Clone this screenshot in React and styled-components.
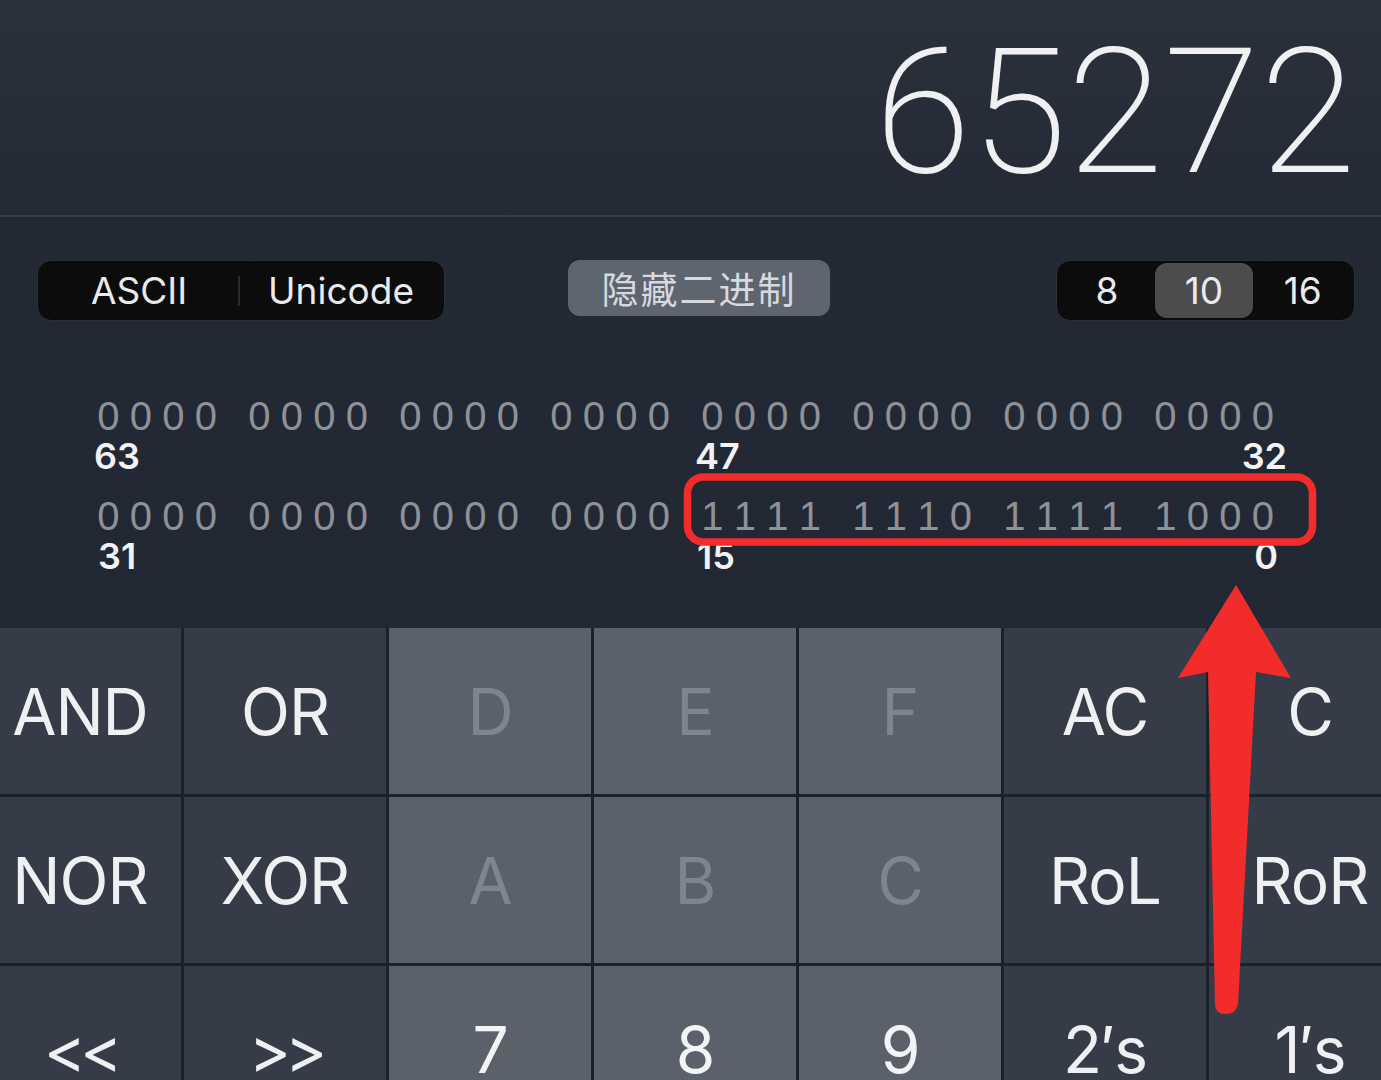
import styled, { createGlobalStyle } from 'styled-components'

const GlobalStyle = createGlobalStyle`
  html, body {
    margin: 0;
    padding: 0;
    background: #222833;
  }

  body {
    width: 1381px;
    height: 1080px;
    overflow: hidden;
    font-family: Inter, "Noto Sans CJK SC", sans-serif;
  }
`

const upperBits = ['0000', '0000', '0000', '0000', '0000', '0000', '0000', '0000']
const lowerBits = ['0000', '0000', '0000', '0000', '1111', '1110', '1111', '1000']

const keys = [
  { label: 'AND', tone: 'dark' },
  { label: 'OR', tone: 'dark' },
  { label: 'D', tone: 'off' },
  { label: 'E', tone: 'off' },
  { label: 'F', tone: 'off' },
  { label: 'AC', tone: 'dark' },
  { label: 'C', tone: 'dark' },
  { label: 'NOR', tone: 'dark' },
  { label: 'XOR', tone: 'dark' },
  { label: 'A', tone: 'off' },
  { label: 'B', tone: 'off' },
  { label: 'C', tone: 'off' },
  { label: 'RoL', tone: 'dark' },
  { label: 'RoR', tone: 'dark' },
  { label: '<<', tone: 'dark', tight: true },
  { label: '>>', tone: 'dark', tight: true },
  { label: '7', tone: 'light' },
  { label: '8', tone: 'light' },
  { label: '9', tone: 'light' },
  { label: '2′s', tone: 'dark' },
  { label: '1′s', tone: 'dark' },
]

const BitRow = ({ groups }) => (
  <DigitRow>
    {groups.map((group, i) => (
      <Group key={i}>
        {group.split('').map((bit, j) => (
          <Bit key={j}>{bit}</Bit>
        ))}
      </Group>
    ))}
  </DigitRow>
)

const App = () => {
  return (
    <Page>
      <GlobalStyle />
      <Display>
        <Value>65272</Value>
      </Display>

      <Controls>
        <Segmented $width={408}>
          <Segment $width={201}>ASCII</Segment>
          <Divider />
          <Segment $width={205}>Unicode</Segment>
        </Segmented>
        <HideButton>隐藏二进制</HideButton>
        <BaseSwitch>
          <Segmented $width={299}>
            <Segment $width={97}>8</Segment>
            <Segment $width={100} $active>10</Segment>
            <Segment $width={100}>16</Segment>
          </Segmented>
        </BaseSwitch>
      </Controls>

      <Bits>
        <BitRow groups={upperBits} />
        <LabelRow>
          <Label $col={1} $shift={2}>63</Label>
          <Label $col={5} $shift={-1}>47</Label>
          <Label $col={8} $end $shift={8}>32</Label>
        </LabelRow>
        <BitRow groups={lowerBits} />
        <LabelRow>
          <Label $col={1} $shift={6}>31</Label>
          <Label $col={5} $shift={1}>15</Label>
          <Label $col={8} $end $shift={-1}>0</Label>
        </LabelRow>
      </Bits>

      <Keypad>
        {keys.map((key, i) => (
          <Key key={i} $tone={key.tone} $tight={key.tight}>
            {key.label}
          </Key>
        ))}
      </Keypad>

      <Annotation viewBox="0 0 1381 1080">
        <rect x="687.5" y="477" width="625" height="65" rx="16" fill="none" stroke="#f22b2b" strokeWidth="7.5" />
        <path
          d="M1236 585 L1291 678 L1256 672 L1238 1004 Q1236 1014 1226 1014 Q1215 1014 1215 1004 L1208 672 L1178 678 Z"
          fill="#f22b2b"
        />
      </Annotation>
    </Page>
  )
}

const Page = styled.div`
  position: relative;
  width: 1381px;
  height: 1080px;
  overflow: hidden;
  background: linear-gradient(180deg, #232a35 0%, #212733 60%, #1f2530 100%);
`

const Display = styled.div`
  height: 217px;
  display: flex;
  justify-content: flex-end;
  align-items: flex-start;
  padding-right: 25px;
  border-bottom: 2px solid #363c47;
  background: linear-gradient(180deg, #2b313b 0%, #242a35 100%);
  box-sizing: border-box;
`

const Value = styled.div`
  margin-top: 25px;
  font-family: Roboto, Inter, sans-serif;
  font-weight: 200;
  font-size: 175px;
  line-height: 1;
  letter-spacing: 0;
  color: #eef0f2;
`

const Controls = styled.div`
  display: flex;
  align-items: flex-start;
  padding: 0 26px 0 37px;
  margin-top: 43px;
`

const Segmented = styled.div`
  display: flex;
  align-items: center;
  width: ${({ $width }) => $width}px;
  height: 61px;
  padding: 0 2px;
  box-sizing: border-box;
  background: #0c0c0d;
  border: 1px solid #2c3038;
  border-radius: 14px;
`

const Segment = styled.div`
  width: ${({ $width }) => $width}px;
  height: 55px;
  display: flex;
  align-items: center;
  justify-content: center;
  border-radius: 12px;
  font-size: 37px;
  color: #e9eaec;
  background: ${({ $active }) => ($active ? '#4c4c4e' : 'transparent')};
`

const Divider = styled.div`
  width: 2px;
  height: 30px;
  background: #2b2b2d;
`

const HideButton = styled.div`
  margin-left: 123px;
  width: 262px;
  height: 56px;
  display: flex;
  align-items: center;
  justify-content: center;
  border-radius: 12px;
  background: #5e656f;
  font-family: "Noto Sans CJK SC", sans-serif;
  font-size: 37px;
  letter-spacing: 2px;
  color: #d6d9de;
`

const BaseSwitch = styled.div`
  margin-left: auto;
`

const Bits = styled.div`
  margin-top: 75px;
  padding-left: 92px;
  width: 1187px;
`

const DigitRow = styled.div`
  display: grid;
  grid-template-columns: repeat(8, 130px);
  column-gap: 21px;
  height: 40px;
  margin-top: 18px;

  &:first-child {
    margin-top: 0;
  }
`

const Group = styled.div`
  display: flex;
`

const Bit = styled.span`
  width: 32.5px;
  text-align: center;
  font-family: "Liberation Sans", Arial, sans-serif;
  font-size: 40px;
  line-height: 40px;
  color: #8e9196;
`

const LabelRow = styled.div`
  display: grid;
  grid-template-columns: repeat(8, 130px);
  column-gap: 21px;
  height: 40px;
  margin-top: 2px;
`

const Label = styled.span`
  grid-column: ${({ $col }) => $col};
  justify-self: ${({ $end }) => ($end ? 'end' : 'start')};
  margin-left: ${({ $end, $shift }) => ($end ? 0 : $shift)}px;
  margin-right: ${({ $end, $shift }) => ($end ? -$shift : 0)}px;
  font-family: Inter, sans-serif;
  font-weight: 600;
  font-size: 36px;
  line-height: 37px;
  color: #f1f2f3;
`

const Keypad = styled.div`
  display: grid;
  grid-template-columns: repeat(7, 202px);
  grid-auto-rows: 166px;
  gap: 3px;
  margin-top: 50px;
  margin-left: -21px;
  background: #1c2129;
`

const keyColors = {
  dark: { bg: '#363c47', fg: '#eef0f2' },
  off: { bg: '#5a616b', fg: '#7f858d' },
  light: { bg: '#5a616b', fg: '#f3f4f5' },
}

const Key = styled.div`
  display: flex;
  align-items: center;
  justify-content: center;
  font-size: 64px;
  letter-spacing: ${({ $tight }) => ($tight ? '-6px' : '-1px')};
  background: ${({ $tone }) => keyColors[$tone].bg};
  color: ${({ $tone }) => keyColors[$tone].fg};
`

const Annotation = styled.svg`
  position: absolute;
  top: 0;
  left: 0;
  width: 1381px;
  height: 1080px;
  pointer-events: none;
`

export default App
